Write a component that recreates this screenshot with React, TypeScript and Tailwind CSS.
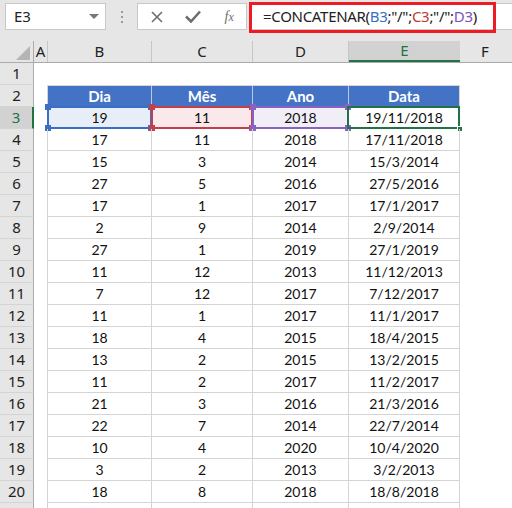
import React from "react";

const data: [number, number, number, string][] = [
  [19, 11, 2018, "19/11/2018"],
  [17, 11, 2018, "17/11/2018"],
  [15, 3, 2014, "15/3/2014"],
  [27, 5, 2016, "27/5/2016"],
  [17, 1, 2017, "17/1/2017"],
  [2, 9, 2014, "2/9/2014"],
  [27, 1, 2019, "27/1/2019"],
  [11, 12, 2013, "11/12/2013"],
  [7, 12, 2017, "7/12/2017"],
  [11, 1, 2017, "11/1/2017"],
  [18, 4, 2015, "18/4/2015"],
  [13, 2, 2015, "13/2/2015"],
  [11, 2, 2017, "11/2/2017"],
  [21, 3, 2016, "21/3/2016"],
  [22, 7, 2014, "22/7/2014"],
  [10, 4, 2020, "10/4/2020"],
  [3, 2, 2013, "3/2/2013"],
  [18, 8, 2018, "18/8/2018"],
];

const uiFont = { fontFamily: "'Noto Sans', 'Open Sans', sans-serif" };
const cellFont = { fontFamily: "Lato, 'Liberation Sans', sans-serif" };

function RowHeader({ n, selected }: { n?: number; selected?: boolean }) {
  return (
    <div
      className={
        "w-[34px] h-[22px] shrink-0 flex items-center justify-center text-[15px] border-b border-b-[#d4d4d4] " +
        (selected
          ? "bg-[#d2d2d2] text-[#217346] border-r-2 border-r-[#217346]"
          : "bg-[#e6e6e6] text-[#222] border-r border-r-[#ababab]")
      }
      style={uiFont}
    >
      {n}
    </div>
  );
}

function Corners({ color }: { color: string }) {
  return (
    <>
      <div className={"absolute -left-[3px] -top-[3px] w-[6px] h-[6px] " + color} />
      <div className={"absolute -right-[3px] -top-[3px] w-[6px] h-[6px] " + color} />
      <div className={"absolute -left-[3px] -bottom-[3px] w-[6px] h-[6px] " + color} />
      <div className={"absolute -right-[3px] -bottom-[3px] w-[6px] h-[6px] " + color} />
    </>
  );
}

export default function App() {
  return (
    <div className="w-[512px] h-[508px] overflow-hidden bg-white relative text-[#111]">
      {/* Top bar */}
      <div className="h-[41px] bg-[#e6e6e6] flex items-start">
        <div
          className="ml-[5px] mt-[3px] w-[101px] h-[27px] bg-white border border-[#c8c8c8] flex items-center justify-between pl-[8px] pr-[6px] text-[15px] text-[#222]"
          style={uiFont}
        >
          <span>E3</span>
          <svg width="10" height="6" viewBox="0 0 10 6">
            <path d="M0 0 L10 0 L5 5 Z" fill="#777" />
          </svg>
        </div>
        <div className="w-[31px] h-[33px] flex flex-col items-center justify-center gap-[3px] pt-[1px]">
          <div className="w-[2px] h-[2px] bg-[#9a9a9a]" />
          <div className="w-[2px] h-[2px] bg-[#9a9a9a]" />
          <div className="w-[2px] h-[2px] bg-[#9a9a9a]" />
        </div>
        <div className="mt-[3px] w-[110px] h-[27px] bg-white border border-[#c8c8c8] flex items-center">
          <div className="w-[36px] flex justify-center ml-[1px]">
            <svg width="12" height="12" viewBox="0 0 12 12">
              <path d="M1 1 L11 11 M11 1 L1 11" stroke="#6e6e6e" strokeWidth="1.6" />
            </svg>
          </div>
          <div className="w-[38px] flex justify-center">
            <svg width="16" height="13" viewBox="0 0 16 13">
              <path d="M1 6.5 L6 11.5 L15 1.5" stroke="#6e6e6e" strokeWidth="2.6" fill="none" />
            </svg>
          </div>
          <div
            className="w-[34px] flex justify-center italic text-[14px] text-[#6e6e6e]"
            style={{ fontFamily: "'Liberation Serif', serif" }}
          >
            <span>
              f<span className="text-[12px]">x</span>
            </span>
          </div>
        </div>
        <div className="ml-[3px] mt-[3px] flex-1 h-[27px] bg-white border-y border-[#c8c8c8] relative flex items-center pl-[13px]">
          <div className="absolute -left-[1px] -top-[2px] w-[247px] h-[31px] border-[3px] border-[#ed1c24]" />
          <span className="text-[15px] text-[#222] tracking-[-0.3px]" style={uiFont}>
            =CONCATENAR(<span className="text-[#3a6ec6]">B3</span>;"/";
            <span className="text-[#c0392b]">C3</span>;"/";
            <span className="text-[#7a52c0]">D3</span>)
          </span>
        </div>
      </div>

      {/* Column headers */}
      <div className="flex h-[22px] bg-[#e6e6e6] border-b border-[#ababab] text-[15px] text-[#222]" style={uiFont}>
        <div className="w-[34px] shrink-0 border-r border-[#ababab] relative">
          <svg className="absolute right-[3px] bottom-[2px]" width="14" height="14" viewBox="0 0 14 14">
            <path d="M14 0 L14 14 L0 14 Z" fill="#b4b4b4" />
          </svg>
        </div>
        <div className="w-[13px] shrink-0 flex items-center justify-center">A</div>
        <div className="w-[105px] shrink-0 border-x border-[#c6c6c6] flex items-center justify-center">B</div>
        <div className="w-[101px] shrink-0 border-r border-[#c6c6c6] flex items-center justify-center">C</div>
        <div className="w-[96px] shrink-0 border-r border-[#c6c6c6] flex items-center justify-center">D</div>
        <div className="w-[111px] shrink-0 bg-[#d2d2d2] border-b-2 border-[#217346] text-[#217346] flex items-center justify-center">
          E
        </div>
        <div className="flex-1 flex items-center justify-center pr-[2px]">F</div>
      </div>

      {/* Row 1 */}
      <div className="flex h-[22px]">
        <RowHeader n={1} />
        <div className="flex-1" />
      </div>

      {/* Row 2: table header */}
      <div className="flex h-[22px]">
        <RowHeader n={2} />
        <div className="w-[13px] shrink-0" />
        <div className="flex text-white font-bold text-[15px] bg-[#4472c4] border-t border-[#d4d4d4]" style={cellFont}>
          <div className="w-[105px] flex items-center justify-center border-l border-[#d4d4d4] border-r border-r-[#b9c8e6]">Dia</div>
          <div className="w-[101px] flex items-center justify-center border-r border-[#b9c8e6]">Mês</div>
          <div className="w-[96px] flex items-center justify-center border-r border-[#b9c8e6]">Ano</div>
          <div className="w-[111px] flex items-center justify-center border-r border-[#d4d4d4]">Data</div>
        </div>
      </div>

      {/* Data rows */}
      {data.map((r, i) => {
        const sel = i === 0;
        return (
          <div key={i} className="flex h-[22px]">
            <RowHeader n={i + 3} selected={sel} />
            <div className="w-[13px] shrink-0" />
            <div className="flex text-[14px] text-[#111]" style={cellFont}>
              <div
                className={
                  "w-[105px] relative flex items-center justify-center border-l border-r border-b border-[#d4d4d4] " +
                  (sel ? "bg-[#e8eef8]" : "")
                }
              >
                {r[0]}
                {sel && (
                  <>
                    <div className="absolute -left-px -top-px -right-px -bottom-px border-2 border-[#3b6fc6]" />
                    <Corners color="bg-[#3b6fc6]" />
                  </>
                )}
              </div>
              <div
                className={
                  "w-[101px] relative flex items-center justify-center border-r border-b border-[#d4d4d4] " +
                  (sel ? "bg-[#fae8ea]" : "")
                }
              >
                {r[1]}
                {sel && (
                  <>
                    <div className="absolute -left-px -top-px -right-px -bottom-px border-2 border-[#c2404b]" />
                    <Corners color="bg-[#c2404b]" />
                  </>
                )}
              </div>
              <div
                className={
                  "w-[96px] relative flex items-center justify-center border-r border-b border-[#d4d4d4] " +
                  (sel ? "bg-[#f1eef8]" : "")
                }
              >
                {r[2]}
                {sel && (
                  <>
                    <div className="absolute -left-px -top-px -right-px -bottom-px border-2 border-[#8a62c4]" />
                    <Corners color="bg-[#8a62c4]" />
                  </>
                )}
              </div>
              <div className="w-[111px] relative flex items-center justify-center border-r border-b border-[#d4d4d4]">
                {r[3]}
                {sel && (
                  <>
                    <div className="absolute -left-[2px] -top-px -right-px -bottom-px border-2 border-[#217346]" />
                    <div className="absolute -right-[4px] -bottom-[4px] w-[6px] h-[6px] bg-[#217346] border border-white" />
                  </>
                )}
              </div>
            </div>
          </div>
        );
      })}

      {/* Row 21 partial */}
      <div className="flex h-[22px]">
        <RowHeader />
        <div className="w-[13px] shrink-0" />
        <div className="w-[105px] border-l border-r border-[#d4d4d4]" />
        <div className="w-[101px] border-r border-[#d4d4d4]" />
        <div className="w-[96px] border-r border-[#d4d4d4]" />
        <div className="w-[111px] border-r border-[#d4d4d4]" />
      </div>
    </div>
  );
}
